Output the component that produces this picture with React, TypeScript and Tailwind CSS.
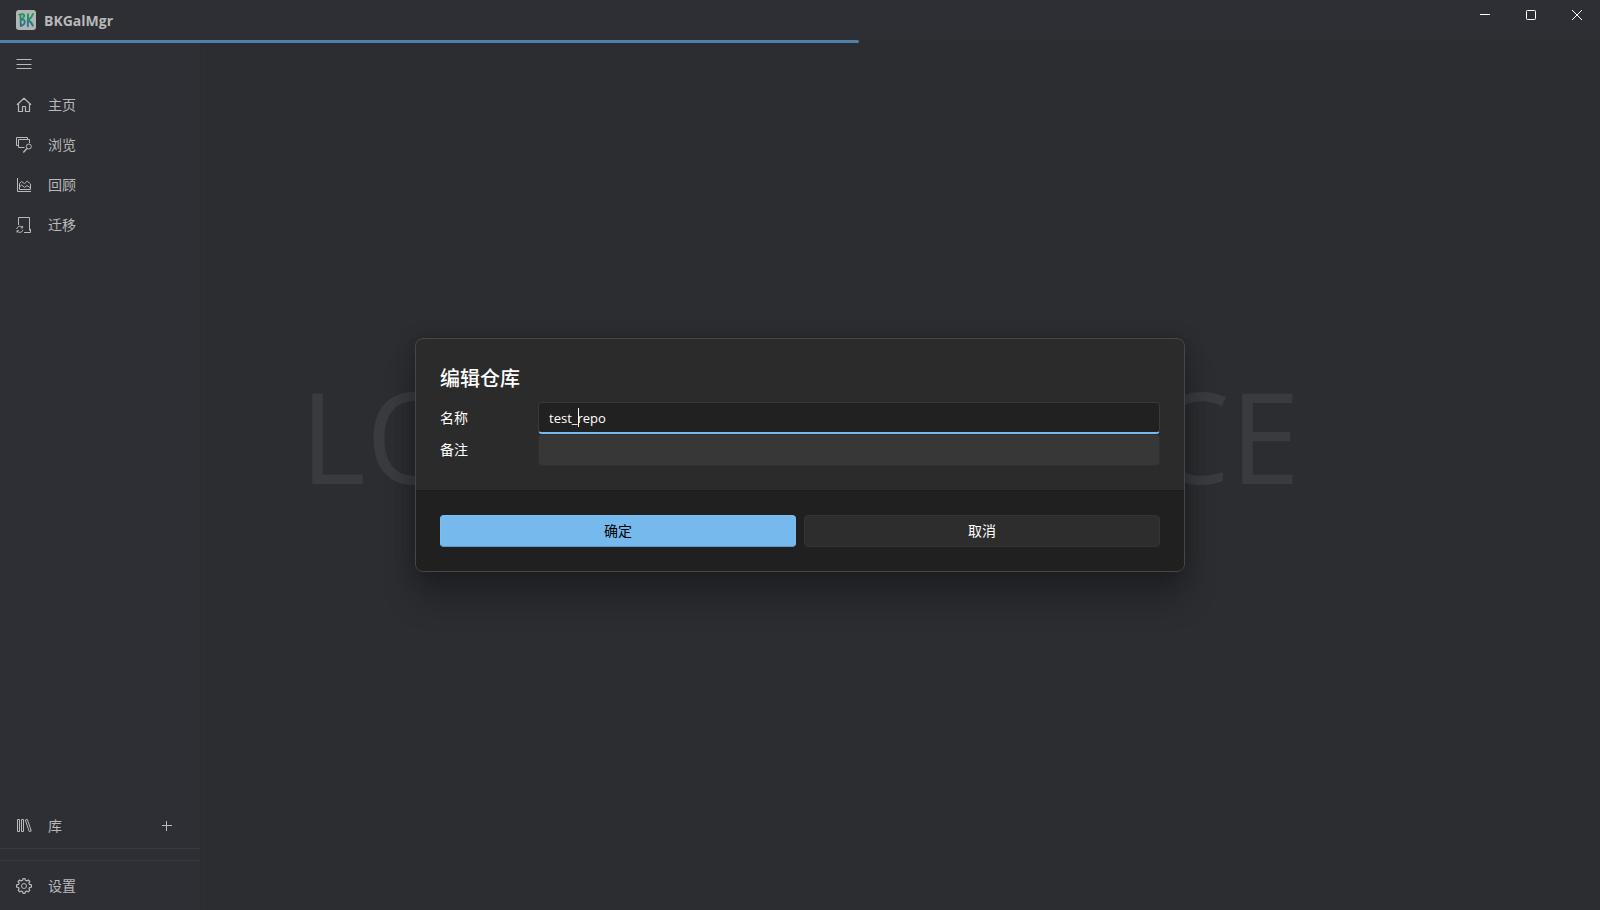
import { useEffect, useRef, useState, type ReactNode } from "react";

function Icon({ children }: { children: ReactNode }) {
  return (
    <svg
      viewBox="0 0 16 16"
      className="size-4 shrink-0"
      fill="none"
      stroke="currentColor"
      strokeWidth="1"
      aria-hidden="true"
    >
      {children}
    </svg>
  );
}

const icons = {
  menu: <path d="M0.5 3.5h15M0.5 8.5h15M0.5 12.5h15" />,
  home: (
    <path d="M1 7.8 8 1.2l7 6.6M2.5 6.6v7.9h4v-5h3v5h4V6.6" strokeWidth="1.2" strokeLinejoin="round" />
  ),
  browse: (
    <>
      <path d="M2.500 8.500h-2v-8h11v2" />
      <path d="M8.500 10.500H2.500v-8h11V6" />
      <circle cx="12.800" cy="9.500" r="2.500" />
      <path d="M11 11.500 7.300 15.500" strokeWidth="1.4" />
    </>
  ),
  review: (
    <>
      <path d="M1.500 1v13.500H15" />
      <path d="M3.500 12.500v-6l2.200-2 2.800 2.200L11.200 4l3.300 3v5.500zM3.500 10l2.200-2 2.800 2.400L11 8.600l3.500 2.400" />
    </>
  ),
  migrate: (
    <>
      <path d="M2.500 8V.5h11v13" />
      <path d="M8 15.500h6.500V12" />
      <path d="M.8 12c.3-1.800 1.500-2.800 3.100-2.800 1.200 0 2.100.6 2.700 1.500M6.600 9v1.900H4.700M6.800 12.800c-.3 1.700-1.500 2.600-3.100 2.600-1.200 0-2.100-.6-2.700-1.500M1 15.600v-1.900h1.900" />
    </>
  ),
  library: (
    <path d="M1.500 1.500h2v12h-2zM5.500 1.500h2v12h-2zM9.300 2l2-.6 4 11.600-2 .7z" />
  ),
  settings: (
    <>
      <path
        strokeLinejoin="round"
        strokeWidth="1.2"
        d="M6.600 2.300 7 .6h2l.4 1.700 1.400.6 1.500-.9 1.500 1.500-.9 1.500.6 1.400 1.900.4v2.300l-1.900.4-.6 1.400.9 1.500-1.500 1.500-1.500-.9-1.400.6-.4 1.800H7l-.4-1.800-1.400-.6-1.500.9-1.500-1.500.9-1.500-.6-1.400-1.900-.4V6.800l1.900-.4.6-1.400-.9-1.500 1.500-1.500 1.500.9z"
      />
      <circle cx="8" cy="8" r="2.500" />
    </>
  ),
};

function NavItem({ icon, label }: { icon: ReactNode; label: string }) {
  return (
    <a href="#" className="flex h-10 items-center gap-4 px-4 text-sm">
      <Icon>{icon}</Icon>
      <span>{label}</span>
    </a>
  );
}

function TitleBar() {
  return (
    <header className="flex h-10 items-start justify-between bg-[#2e2f34]">
      <div className="flex h-10 items-center gap-2 pl-4">
        <svg viewBox="0 0 20 20" className="size-5" aria-hidden="true">
          <defs>
            <linearGradient id="logo" gradientUnits="userSpaceOnUse" x1="0" y1="4" x2="0" y2="16">
              <stop offset="0" stopColor="#16a04c" />
              <stop offset="1" stopColor="#2c6fa0" />
            </linearGradient>
          </defs>
          <rect width="20" height="20" rx="3" fill="#b4b4b4" />
          <g fill="none" stroke="url(#logo)" strokeWidth="1.9" strokeLinecap="round" strokeLinejoin="round">
            <path d="M4.500 4.500 4.800 16M3.300 4.600c3-1 5.200-.4 4.900 1.400-.2 1.700-1.600 2.800-3 3.500 2-.3 3.700.4 3.600 2.300C8.700 14 6.800 15.500 4.800 16" />
            <path d="M12 4.300 11.800 16.200M17 4c-1 2.500-2.800 4.800-4.800 6.200 2 1 3.500 3 4.600 5.500" />
          </g>
        </svg>
        <h1 className="pt-px text-sm font-bold">BKGalMgr</h1>
      </div>
      <div className="flex text-white">
        <button type="button" aria-label="Minimize" className="flex h-[30px] w-[46px] items-center justify-center">
          <svg viewBox="0 0 10 10" className="size-[10px]" stroke="currentColor"><path d="M0 4.500h10" /></svg>
        </button>
        <button type="button" aria-label="Maximize" className="flex h-[30px] w-[46px] items-center justify-center">
          <svg viewBox="0 0 10 10" className="size-[10px]" stroke="currentColor" fill="none"><rect x=".5" y=".5" width="9" height="9" rx=".8" /></svg>
        </button>
        <button type="button" aria-label="Close" className="flex h-[30px] w-[46px] items-center justify-center">
          <svg viewBox="0 0 10 10" className="size-[10px]" stroke="currentColor"><path d="M0 0l10 10M10 0 0 10" /></svg>
        </button>
      </div>
    </header>
  );
}

function Sidebar() {
  return (
    <nav className="flex w-[200px] shrink-0 flex-col bg-[#2e2f34] pb-1">
      <button type="button" aria-label="Menu" className="flex h-[45px] items-center px-4 pt-[3px]">
        <Icon>{icons.menu}</Icon>
      </button>
      <NavItem icon={icons.home} label="主页" />
      <NavItem icon={icons.browse} label="浏览" />
      <NavItem icon={icons.review} label="回顾" />
      <NavItem icon={icons.migrate} label="迁移" />
      <div className="mt-auto flex items-center justify-between pr-6">
        <NavItem icon={icons.library} label="库" />
        <button type="button" aria-label="Add" className="flex h-5 w-[18px] items-center justify-center">
          <svg viewBox="0 0 10 10" className="size-[10px]" stroke="currentColor"><path d="M0 4.500h10M4.500 0v10" /></svg>
        </button>
      </div>
      <div className="mt-[2px] h-[13px] border-y border-[#3a3b40]" />
      <div className="pt-[5px]">
        <NavItem icon={icons.settings} label="设置" />
      </div>
    </nav>
  );
}

function EditDialog() {
  const [name, setName] = useState("test_repo");
  const [note, setNote] = useState("");
  const nameRef = useRef<HTMLInputElement>(null);

  useEffect(() => {
    nameRef.current?.focus();
    nameRef.current?.setSelectionRange(5, 5);
  }, []);

  return (
    <form
      role="dialog"
      aria-labelledby="dialog-title"
      onSubmit={(e) => e.preventDefault()}
      className="relative w-[770px] overflow-hidden rounded-lg border border-[#454648] bg-[#2b2b2b] text-sm text-white shadow-[0_28px_32px_rgba(0,0,0,0.24),0_2px_20px_rgba(0,0,0,0.24)]"
    >
      <div className="px-6 pt-[26px] pb-6">
        <h2 id="dialog-title" className="mb-[9px] text-xl font-medium leading-7">编辑仓库</h2>
        <div className="grid grid-cols-[98px_1fr] items-center">
          <label htmlFor="name">名称</label>
          <div className="relative">
            <input
              id="name"
              ref={nameRef}
              value={name}
              onChange={(e) => setName(e.target.value)}
              className="block h-8 w-full rounded border border-[#393939] border-b-2 border-b-[#76b9ed] bg-[#212121] px-[10px] text-[13px] caret-transparent outline-none"
            />
            <span className="absolute top-[6px] left-[40px] h-[19px] w-px bg-white" />
          </div>
          <label htmlFor="note">备注</label>
          <input
            id="note"
            value={note}
            onChange={(e) => setNote(e.target.value)}
            className="block h-8 w-full rounded border border-[#2f2f2f] bg-[#373737] px-[10px] text-[13px] outline-none"
          />
        </div>
      </div>
      <div className="grid grid-cols-2 gap-2 border-t border-[#1c1c1c] bg-[#202020] p-6">
        <button type="submit" className="h-8 rounded border border-[#7dbdf0] border-b-[#6098c5] bg-[#76b9ed] text-black">
          确定
        </button>
        <button type="button" className="h-8 rounded border border-[#343434] bg-[#2d2d2d]">
          取消
        </button>
      </div>
    </form>
  );
}

export default function App() {
  return (
    <div className="relative flex min-h-screen flex-col bg-[#2c2d31] font-['Open_Sans','Noto_Sans_CJK_SC',sans-serif] text-[#b9b9bb]">
      <TitleBar />
      <div className="flex flex-1">
        <Sidebar />
        <main className="flex-1 border-l border-[#2a2b2e]" />
      </div>
      <div
        role="progressbar"
        aria-label="Loading"
        aria-valuenow={54}
        className="absolute top-10 left-0 h-[3px] w-[53.7%] rounded-r bg-[#4f81a8]"
      />
      <div className="absolute inset-0 flex items-center justify-center">
        <div aria-hidden="true" className="absolute inset-x-[300px] flex justify-between pb-10 text-[126px] leading-none text-[#3a3b3f]">
          <span>LO</span>
          <span>CE</span>
        </div>
        <EditDialog />
      </div>
    </div>
  );
}
